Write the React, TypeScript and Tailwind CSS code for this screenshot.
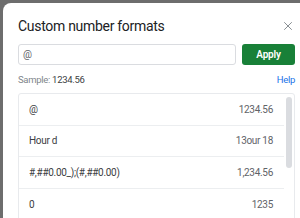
import { X } from 'lucide-react'

const rows = [
  { fmt: '@', sample: '1234.56' },
  { fmt: 'Hour d', sample: '13our 18' },
  { fmt: '#,##0.00_);(#,##0.00)', sample: '1,234.56' },
  { fmt: '0', sample: '1235' },
]

export default function App() {
  return (
    <div className="h-[218px] w-[300px] overflow-hidden bg-[#6d6d6d] pl-[3px] pt-[3px] font-['Roboto',sans-serif]">
      <div className="h-[260px] w-[320px] rounded-tl-[8px] bg-white pl-[15px] pr-[25px] pt-[13px]">
        <div className="flex h-[20px] w-[280px] items-center justify-between">
          <h1 className="text-[14px] leading-none tracking-[-0.3px] text-[#202124]">Custom number formats</h1>
          <X className="mr-[3px] h-[14px] w-[14px] text-[#80868b]" strokeWidth={1.6} />
        </div>
        <div className="mt-[8px] flex w-[277px] gap-[6px]">
          <div className="flex h-[21px] flex-1 items-center rounded-[3px] border border-[#dadce0] px-[4px] text-[10px] text-[#5f6368]">@</div>
          <button className="h-[21px] w-[53px] rounded-[3px] bg-[#188038] text-[10px] font-semibold tracking-[-0.2px] text-white">Apply</button>
        </div>
        <div className="mt-[8px] flex h-[14px] w-[277px] items-center justify-between text-[9.5px] tracking-[-0.3px]">
          <span className="text-[#80868b]">Sample: <span className="text-[#3c4043]">1234.56</span></span>
          <span className="text-[#1a73e8]">Help</span>
        </div>
        <div className="mt-[6px] flex w-[277px] rounded-[3px] border border-[#e8eaed]">
          <div className="flex-1">
            {rows.map((r, i) => (
              <div
                key={r.fmt}
                className={`flex h-[31.5px] items-center justify-between pl-[10px] pr-[11px] text-[10px] tracking-[-0.3px] text-[#3c4043] ${i < rows.length - 1 ? 'border-b border-[#eceef0]' : ''}`}
              >
                <span>{r.fmt}</span>
                <span className="text-[#5f6368]">{r.sample}</span>
              </div>
            ))}
          </div>
          <div className="flex w-[10px] justify-end pr-[2px] pt-[3px]">
            <div className="h-[71px] w-[6px] rounded-full bg-[#dadce0]" />
          </div>
        </div>
      </div>
    </div>
  )
}
